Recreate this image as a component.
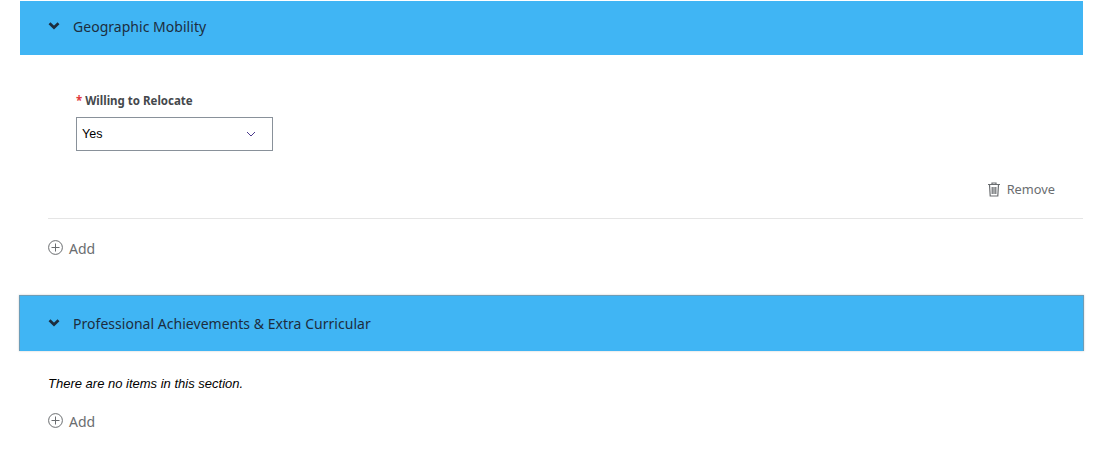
<main class="page">
  <section class="section first">
    <header class="bar">
      <svg class="chev" viewBox="0 0 12 8" width="12" height="8"><path d="M1.500 1.300 6 5.600l4.500-4.300" fill="none" stroke="#1d2d3e" stroke-width="2.700"/></svg>
      <span class="title">Geographic Mobility</span>
    </header>
    <div class="body">
      <div class="item">
        <div class="field">
          <label class="label" for="rel"><span class="req">*</span> Willing to Relocate</label>
          <div class="select" id="rel">
            <span>Yes</span>
            <svg viewBox="0 0 10 6" width="10" height="6"><path d="M1 1l4 4 4-4" fill="none" stroke="#4b3a8c" stroke-width="1"/></svg>
          </div>
        </div>
        <div class="remove-row">
          <span class="remove">
            <svg viewBox="0 0 14 15" width="14" height="15"><path d="M1 2.500h12M5 2.500V1h4v1.500M2.500 2.500l.7 11.500h7.600l.7-11.500M5.200 5v7M7 5v7M8.800 5v7" fill="none" stroke="#6a6d70" stroke-width="1.200"/></svg>
            Remove
          </span>
        </div>
      </div>
      <div class="add">
        <svg viewBox="0 0 15 15" width="15" height="15"><circle cx="7.500" cy="7.500" r="6.900" fill="none" stroke="#6a6d70"/><path d="M7.500 3.500v8M3.500 7.500h8" stroke="#6a6d70"/></svg>
        Add
      </div>
    </div>
  </section>

  <section class="section second">
    <header class="bar">
      <svg class="chev" viewBox="0 0 12 8" width="12" height="8"><path d="M1.500 1.300 6 5.600l4.500-4.300" fill="none" stroke="#1d2d3e" stroke-width="2.700"/></svg>
      <span class="title">Professional Achievements &amp; Extra Curricular</span>
    </header>
    <div class="body">
      <p class="empty">There are no items in this section.</p>
      <div class="add">
        <svg viewBox="0 0 15 15" width="15" height="15"><circle cx="7.500" cy="7.500" r="6.900" fill="none" stroke="#6a6d70"/><path d="M7.500 3.500v8M3.500 7.500h8" stroke="#6a6d70"/></svg>
        Add
      </div>
    </div>
  </section>
</main>

<style>
  :global(body) { margin: 0; background: #fff; }
  .page {
    width: 1107px;
    height: 471px;
    overflow: hidden;
    padding-top: 1px;
    box-sizing: border-box;
    font-family: "Noto Sans", "Open Sans", sans-serif;
    color: #32363a;
  }
  .section { margin: 0 24px 0 20px; }
  .first { margin-bottom: 37px; }
  .bar {
    height: 54px;
    background: #40b5f4;
    display: flex;
    align-items: center;
    padding: 0 0 4px 28px;
    box-sizing: border-box;
  }
  .second .bar {
    height: 56px;
    margin: 0 -1px;
    padding: 0 0 1px 28px;
    border: 1px solid #6c9db8;
    border-bottom: 0;
    box-shadow: 0 0 2px rgba(0,0,0,.2);
  }
  .chev { margin-right: 13px; flex: none; }
  .title { font-size: 14px; letter-spacing: .03px; color: #1d2d3e; }
  .body { padding-left: 28px; }
  .item {
    padding-top: 37px;
    height: 164px;
    box-sizing: border-box;
    border-bottom: 1px solid #e5e5e5;
  }
  .field { margin-left: 28px; }
  .label { display: block; font-size: 11.5px; font-weight: 700; color: #44484c; line-height: 17px; }
  .req { color: #e0393e; }
  .select {
    margin-top: 8px;
    width: 197px;
    height: 34px;
    box-sizing: border-box;
    border: 1px solid #89919a;
    display: flex;
    align-items: center;
    justify-content: space-between;
    padding: 0 16px 0 5px;
    font-family: "Liberation Sans", sans-serif;
    font-size: 12.500px;
    color: #000;
  }
  .remove-row { display: flex; justify-content: flex-end; padding: 29px 28px 0 0; }
  .remove { display: flex; align-items: center; gap: 6px; font-size: 12.800px; color: #6a6d70; }
  .add { display: flex; align-items: center; gap: 6px; font-size: 14px; color: #6a6d70; padding-top: 20px; }
  .add svg { margin-top: -2px; }
  .second .add { padding-top: 21px; }
  .empty {
    margin: 0;
    padding-top: 26px;
    font-family: "Liberation Sans", sans-serif;
    font-style: italic;
    font-size: 13px;
    line-height: 14px;
    color: #000;
  }
</style>
